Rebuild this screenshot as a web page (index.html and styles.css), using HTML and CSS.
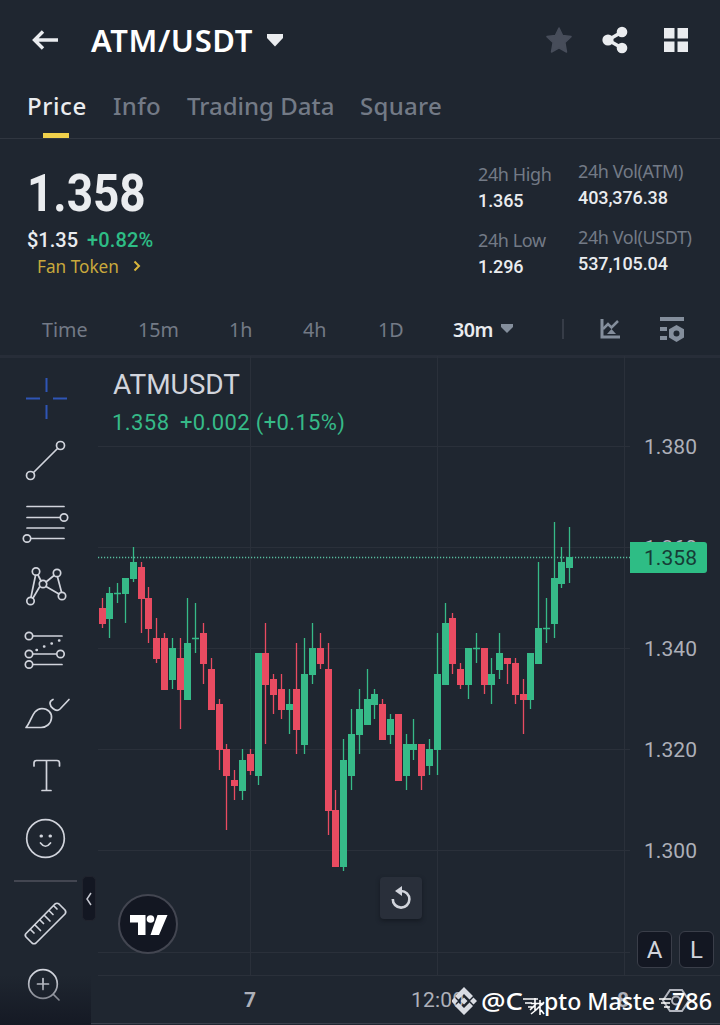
FILE: index.html
```html
<!DOCTYPE html>
<html lang="en">
<head>
<meta charset="utf-8">
<title>ATM/USDT</title>
<link rel="stylesheet" href="styles.css">
</head>
<body>
<main class="app">
  <header class="topbar">
    <svg class="back" width="28" height="22" viewBox="0 0 28 22"><path d="M27 11H4M12 2.5L3.5 11L12 19.5"/></svg>
    <h1 class="pair">ATM/USDT</h1>
    <svg class="caret" width="18" height="13" viewBox="0 0 18 13"><path d="M1 0H17V4L9 12.5L1 4Z"/></svg>
    <div class="actions">
      <svg width="28" height="28" viewBox="0 0 28 28"><path fill="#474d5a" stroke="#474d5a" stroke-width="1.5" stroke-linejoin="round" d="M14 2L17.6 9.5L26 10.6L19.9 16.5L21.5 26L14 21.8L6.500 26L8.100 16.500L2 10.600L10.400 9.500Z"/></svg>
      <svg width="28" height="28" viewBox="0 0 28 28"><path fill="none" stroke="#eaecef" stroke-width="3.500" d="M21 6L7 14L21 22"/><g fill="#eaecef"><circle cx="21" cy="6" r="5.300"/><circle cx="7" cy="14" r="5.600"/><circle cx="21" cy="22" r="5.300"/></g></svg>
      <svg width="26" height="26" viewBox="0 0 26 26"><path fill="#eaecef" d="M1 1H11.500V11.500H1ZM14.500 1H25V11.500H14.500ZM1 14.500H11.500V25H1ZM14.500 14.500H25V25H14.500Z"/></svg>
    </div>
  </header>
  <nav class="tabs">
    <span class="tab tab-price">Price</span><span class="tab tab-info">Info</span><span class="tab tab-trading">Trading Data</span><span class="tab tab-square">Square</span>
  </nav>
  <section class="summary">
    <div class="quote">
      <div class="last">1.358</div>
      <div class="change"><span class="fiat">$1.35</span><span class="pct">+0.82%</span></div>
      <div class="tag"><span class="tag-text">Fan Token</span><svg width="8" height="12" viewBox="0 0 8 12"><path d="M1.500 1.500L6 6L1.500 10.500"/></svg></div>
    </div>
    <dl class="stats stats-range">
      <dt>24h High</dt><dd>1.365</dd>
      <dt>24h Low</dt><dd>1.296</dd>
    </dl>
    <dl class="stats stats-volume">
      <dt>24h Vol(ATM)</dt><dd>403,376.38</dd>
      <dt>24h Vol(USDT)</dt><dd>537,105.04</dd>
    </dl>
  </section>
  <nav class="intervals">
    <span class="iv iv-time">Time</span><span class="iv iv-15">15m</span><span class="iv iv-1h">1h</span><span class="iv iv-4h">4h</span><span class="iv iv-1d">1D</span><span class="iv iv-30">30m</span>
    <svg class="iv-caret" width="12" height="9" viewBox="0 0 12 9"><path d="M0 0H12V3L6 9L0 3Z"/></svg>
    <i class="sep"></i>
    <svg class="iv-chart" width="22" height="22" viewBox="0 0 22 22"><g fill="none" stroke="#848e9c"><path stroke-width="3" d="M3 1V19H21"/><path stroke-width="2.500" d="M4 11L9 6L12.500 9.500L19 3"/></g><path fill="#848e9c" d="M8 16L12.500 11L17 16Z"/></svg>
    <svg class="iv-set" width="26" height="26" viewBox="0 0 26 26"><g fill="#848e9c"><path d="M1 1H25V5H1ZM1 11H8V15H1ZM1 20H8V24H1Z"/><path fill-rule="evenodd" d="M17.500 9L25 13.200V21.500L17.500 26L10 21.500V13.200ZM17.500 14.500A3 3 0 1 0 17.500 20.500A3 3 0 1 0 17.500 14.500Z"/></g></svg>
  </nav>
  <section class="workspace">
    <aside class="tools">
      <svg width="91" height="669" viewBox="0 356 91 669">
        <defs><linearGradient id="fade" x1="0" y1="0" x2="0" y2="1"><stop offset="0" stop-color="#131722" stop-opacity="0"/><stop offset="1" stop-color="#131722" stop-opacity=".85"/></linearGradient></defs>
        <path stroke="#2f55b5" stroke-width="2" d="M46.500 378V392M46.500 405V419M26 398.500H40M53 398.500H67"/>
        <g fill="none" stroke="#d1d4dc" stroke-width="1.700" stroke-linecap="round" stroke-linejoin="round">
          <path d="M33.500 472.500L57.500 448.500"/><circle cx="60.500" cy="445.500" r="4"/><circle cx="30.500" cy="475.500" r="4"/>
          <path d="M27 506.500H64M27 517.500H60M27 528H64M31 538.500H64"/><circle cx="64" cy="517.500" r="3.700"/><circle cx="27" cy="538.500" r="3.700"/>
          <path d="M35.500 575.500L31 597M38 575L41 581M46 582L54 575.500M57.500 577L61.500 592M46 586.500L59 594M39.500 587L33 598"/>
          <circle cx="36" cy="571.500" r="3.700"/><circle cx="57" cy="573" r="3.700"/><circle cx="43" cy="584" r="3.700"/><circle cx="30.500" cy="601" r="3.700"/><circle cx="62" cy="596" r="3.700"/>
          <path d="M33 636H62M33 654H56M33 664.500H62"/><circle cx="29" cy="636" r="3.700"/><circle cx="29" cy="654" r="3.700"/><circle cx="60.500" cy="654" r="3.700"/><circle cx="29" cy="664.500" r="3.700"/><path stroke-width="2.400" d="M36.500 650h.4M44 646.500h.4M51.500 643.500h.4M59 640.500h.4"/>
          <path d="M26 727.500C32 721 32 709 42 708.500C48 708.500 52 713 51.500 718C51 724 46 727.500 41 727.500ZM53 699.500C48.500 701.500 49.500 705.500 53 708.500C56 711 58 711 60 709L69 699.500"/>
          <path d="M34 766V763Q34 760.500 36.500 760.500H57Q59.500 760.500 59.500 763V766M46.500 761V790M42 790.500H51"/>
          <circle cx="45.500" cy="838.500" r="18.800"/><path d="M40.500 843Q45.500 849.500 50.500 843"/><path stroke-width="3" d="M41 836h.5M50 836h.5"/>
          <path d="M26 933.500L55 904Q57 902.500 59 904L65 910Q66.500 912 65 914L36 943Q34 944.500 32 943L26 937Q24.500 935 26 933.500ZM30.500 929.500L34 933M35 925L40.500 930.500M40 920L43.500 923.500M44.500 915.500L50 921M49.500 911L53 914.500M54 906L57 909"/>
          <circle cx="43" cy="984" r="14.300"/><path d="M43 978.500V989.500M37.500 984H48.500M53.500 994.500L59 1000"/>
        </g>
        <path stroke="#434651" stroke-width="2" d="M14 881H77"/>
        <path fill="url(#fade)" d="M0 975H91V1025H0Z"/>
      </svg>
    </aside>
    <div class="chart">
      <svg width="629" height="669" viewBox="91 356 629 669">
        <path class="grid" d="M98 446.500H630M98 547.500H630M98 648.500H630M98 749.500H630M98 850.500H630M98 952.500H630M98 975.500H720M250.500 356V975M437.500 356V975M624.500 356V975"/>
        <path stroke="#58bd9e" stroke-width="1.300" stroke-dasharray="1.200 1.800" d="M98 557.500H630"/>
        <path class="wick up" d="M109.500 587V638M117.500 583V603M114 593.500H121M125.500 578V623M133.500 547V582M172.500 638V689M187.500 598V700M195.500 603V653M192 638.500H199M242.500 749V800M258.500 653V785M289.500 689V734M304.500 638V754M312.500 623V684M343.500 739V871M351.500 709V790M359.500 689V754M367.500 669V725M374.500 689V719M390.500 714V744M406.500 734V790M413.500 719V760M429.500 739V775M437.500 633V775M445.500 603V685M468.500 648V699M476.500 633V663M473 648.500H480M491.500 658V704M499.500 633V679M530.500 653V709M538.500 562V664M546.500 598V643M543 628.500H550M554.500 522V638M561.500 547V588M569.500 527V583"/>
        <path class="wick down" d="M102.500 598V628M141.500 562V633M148.500 587V643M156.500 618V663M164.500 633V690M180.500 638V729M203.500 623V684M211.500 658V710M219.500 699V770M226.500 744V830M234.500 770V800M250.500 749V775M265.500 623V744M273.500 674V714M281.500 674V719M296.500 643V754M320.500 633V669M328.500 643V835M335.500 790V867M382.500 699V740M421.500 744V790M452.500 613V674M460.500 663V689M484.500 648V694M507.500 658V684M515.500 658V704M523.500 679V734"/>
        <path class="body up" d="M109.500 593V619M125.500 578V594M133.500 562V579M172.500 648V680M187.500 643V700M242.500 760V791M258.500 653V776M289.500 704V710M304.500 674V745M312.500 648V675M343.500 760V867M351.500 734V776M359.500 709V735M367.500 699V725M374.500 694V705M390.500 719V735M406.500 744V776M413.500 744V750M429.500 749V766M437.500 674V750M445.500 623V685M468.500 648V685M491.500 674V685M499.500 653V670M530.500 653V700M538.500 628V664M554.500 578V624M561.500 562V584M569.500 557V568"/>
        <path class="body down" d="M102.500 608V624M141.500 567V599M148.500 598V629M156.500 638V659M164.500 638V690M180.500 658V690M203.500 633V664M211.500 669V710M219.500 704V750M226.500 749V776M234.500 780V786M250.500 754V771M265.500 653V685M273.500 679V695M281.500 689V710M296.500 689V730M320.500 648V664M328.500 669V811M335.500 810V867M382.500 704V740M398.500 714V781M421.500 744V776M452.500 618V664M460.500 669V685M484.500 648V685M507.500 658V664M515.500 663V695M523.500 694V700"/>
        <text class="symbol" x="113" y="394" textLength="127">ATMUSDT</text>
        <text class="legend" x="112" y="430" textLength="57">1.358</text><text class="legend" x="180" y="430" textLength="165">+0.002 (+0.15%)</text>
        <g class="axis">
          <text x="644" y="454" textLength="53">1.380</text><text x="644" y="555" textLength="53">1.360</text><text x="644" y="656" textLength="53">1.340</text><text x="644" y="757" textLength="53">1.320</text><text x="644" y="858" textLength="53">1.300</text>
          <text x="244" y="1007" font-weight="700">7</text><text x="411" y="1007" textLength="53">12:00</text><text x="617" y="1007" font-weight="700">8</text>
        </g>
        <path fill="#2ebd85" d="M630 542H704Q707 542 707 545V570Q707 573 704 573H630Z"/>
        <text class="price-label" x="644" y="565" textLength="53">1.358</text>
        <g fill="none" stroke="#b2b5be" stroke-width="2"><path d="M670 990H682L689 1000.500L682 1011H670L663 1000.500Z"/><circle cx="676" cy="1000.500" r="4"/></g>
        <circle cx="148" cy="924" r="29" fill="#131722" stroke="#434651" stroke-width="2"/>
        <g fill="#fff"><path d="M130 915H145.500V935H138V922.500H130ZM157.500 915H167.500L159 935H150.500Z"/><circle cx="150.500" cy="919" r="3.800"/></g>
        <path stroke="#3a404c" d="M91 1023.500H720"/>
      </svg>
      <button class="reset"><svg width="22" height="24" viewBox="0 0 22 24"><path fill="none" stroke="#d1d4dc" stroke-width="2.600" d="M2.800 13A8.300 8.300 0 1 0 11 5"/><path fill="#d1d4dc" d="M12 0V10L5 5Z"/></svg></button>
      <div class="scale"><button>A</button><button>L</button></div>
      <button class="collapse"><svg width="6" height="14" viewBox="0 0 6 14"><path fill="none" stroke="#c5c8d0" stroke-width="1.500" d="M5 1L1 7L5 13"/></svg></button>
    </div>
  </section>
  <div class="watermark">
    <svg width="240" height="34" viewBox="452 984 240 34">
      <g fill="#d9dce3"><path d="M464 987L473 996L469.500 999.500L464 994L458.500 999.500L455 996ZM464 1015L473 1006L469.500 1002.500L464 1008L458.500 1002.500L455 1006ZM464 997.500L467.500 1001L464 1004.500L460.500 1001ZM454.500 997.500L458 1001L454.500 1004.500L451 1001ZM473.500 997.500L477 1001L473.500 1004.500L470 1001Z"/></g>
      <path fill="none" stroke="#fff" stroke-width="1.600" d="M523 999H538M525 1003H532M528 1007H534M535 998V1012M540 1000V1015M531 1003.500H544M530 1010L536 1004M536 1010L544 1002M531 1014L536 1010M540 1006L544 1003M541 1010L544 1014M659 999H671M661 1003H670M664 1007H670"/>
    </svg>
    <svg class="handle" width="240" height="34" viewBox="480 984 240 34"><text x="481" y="1010" textLength="42" lengthAdjust="spacingAndGlyphs">@C</text><text x="544" y="1010" textLength="111" lengthAdjust="spacingAndGlyphs">pto Maste</text><text x="672" y="1010" textLength="40" lengthAdjust="spacingAndGlyphs">786</text></svg>
  </div>
</main>
</body>
</html>
```
FILE: styles.css
```css
* { box-sizing: border-box; }
body { margin: 0; background: #1f2630; font-family: "Noto Sans", "Open Sans", sans-serif; color: #eaecef; }
.app { position: relative; width: 720px; height: 1025px; overflow: hidden; display: flex; flex-direction: column; }
svg { display: block; flex: none; }
span, dt, dd { white-space: nowrap; }

.topbar { height: 80px; display: flex; align-items: center; padding: 0 31px; }
.back { fill: none; stroke: #eaecef; stroke-width: 3.4; }
.pair { margin: 0 0 0 32px; width: 162px; font-size: 31px; line-height: 40px; font-weight: 600; letter-spacing: .6px; color: #fff; }
.caret { margin-left: 13px; fill: #eaecef; }
.actions { margin-left: auto; margin-right: 0; display: flex; align-items: center; }
.actions svg + svg { margin-left: 28px; }
.actions svg:last-child { margin-left: 34px; }

.tabs { height: 59px; border-bottom: 1px solid #303640; display: flex; padding-left: 27px; font-size: 24px; line-height: 52px; font-weight: 500; color: #737a86; }
.tab-price { width: 86px; color: #eaecef; position: relative; letter-spacing: .6px; }
.tab-price::after { content: ""; position: absolute; left: 16px; bottom: 0; width: 26px; height: 5px; background: #f0d04b; }
.tab-info { width: 74px; letter-spacing: .3px; }
.tab-trading { width: 173px; }
.tab-square { letter-spacing: .3px; }

.summary { height: 163px; display: flex; padding-left: 27px; }
.quote { width: 451px; }
.last { margin-top: 22px; height: 66px; font: 700 51px/66px Roboto, sans-serif; transform: scaleX(.9); transform-origin: 0 0; }
.change { display: flex; gap: 9px; height: 26px; font: 500 20px/26px Roboto, sans-serif; }
.pct { color: #2ebd85; letter-spacing: .15px; }
.tag { display: flex; align-items: center; gap: 14px; padding-left: 10px; height: 26px; font-size: 17.2px; color: #c9a93c; }
.tag svg { fill: none; stroke: #d9b63c; stroke-width: 2; }
.stats { margin: 0; padding-top: 21px; width: 100px; }
.stats-volume { padding-top: 18px; }
.stats dt { font-size: 18px; letter-spacing: -.4px; line-height: 28px; color: #737a86; }
.stats dd { margin: 0 0 13px; font: 500 18px/25px Roboto, sans-serif; letter-spacing: -.1px; }

.intervals { height: 56px; border-bottom: 3px solid #272d38; display: flex; align-items: center; padding-left: 42px; font-size: 19.7px; color: #737a86; }
.iv { padding-top: 2px; }
.iv-time { width: 96px; }
.iv-15 { width: 91px; }
.iv-1h { width: 74px; }
.iv-4h { width: 75px; }
.iv-1d { width: 75px; }
.iv-30 { width: 48px; color: #eaecef; font-weight: 600; letter-spacing: -.5px; }
.iv-caret { fill: #848e9c; }
.sep { width: 2px; height: 20px; background: #363c47; margin: 0 35px 0 49px; }
.iv-set { margin-left: 38px; }

.workspace { flex: 1; display: flex; margin-top: -2px; height: 669px; }
.tools { width: 91px; }
.chart { position: relative; width: 629px; height: 669px; }
.chart text { font-family: Roboto, sans-serif; }
.grid { fill: none; stroke: #2a303a; }
.wick { fill: none; stroke-width: 1.3; }
.body { fill: none; stroke-width: 7; }
.up { stroke: #36ba88; }
.down { stroke: #e94b61; }
.chart .symbol { font-size: 28px; fill: #d1d4dc; }
.chart .legend { font-size: 22px; fill: #36ba88; }
.axis { font-size: 21px; fill: #adb0b9; }
.price-label { font-size: 21px; fill: #163c36; }

button { border: 0; padding: 0; display: flex; align-items: center; justify-content: center; }
.reset { position: absolute; left: 289px; top: 521px; width: 42px; height: 42px; border-radius: 4px; background: #292f3a; box-shadow: 0 2px 4px #151a22; }
.scale { position: absolute; left: 546px; top: 575px; display: flex; gap: 7px; }
.scale button { width: 35px; height: 37px; border: 1px solid #3a3e49; border-radius: 6px; background: #131722; color: #d1d4dc; font: 24px/34px Roboto, sans-serif; }
.collapse { position: absolute; left: -9px; top: 520px; width: 14px; height: 45px; border-radius: 5px; background: #131722; border: 1px solid #20232d; }
.watermark { position: absolute; left: 452px; top: 984px; }
.handle { position: absolute; left: 28px; top: 0; }
.handle text { font: 500 24px "Noto Sans", sans-serif; fill: #fff; }
```
